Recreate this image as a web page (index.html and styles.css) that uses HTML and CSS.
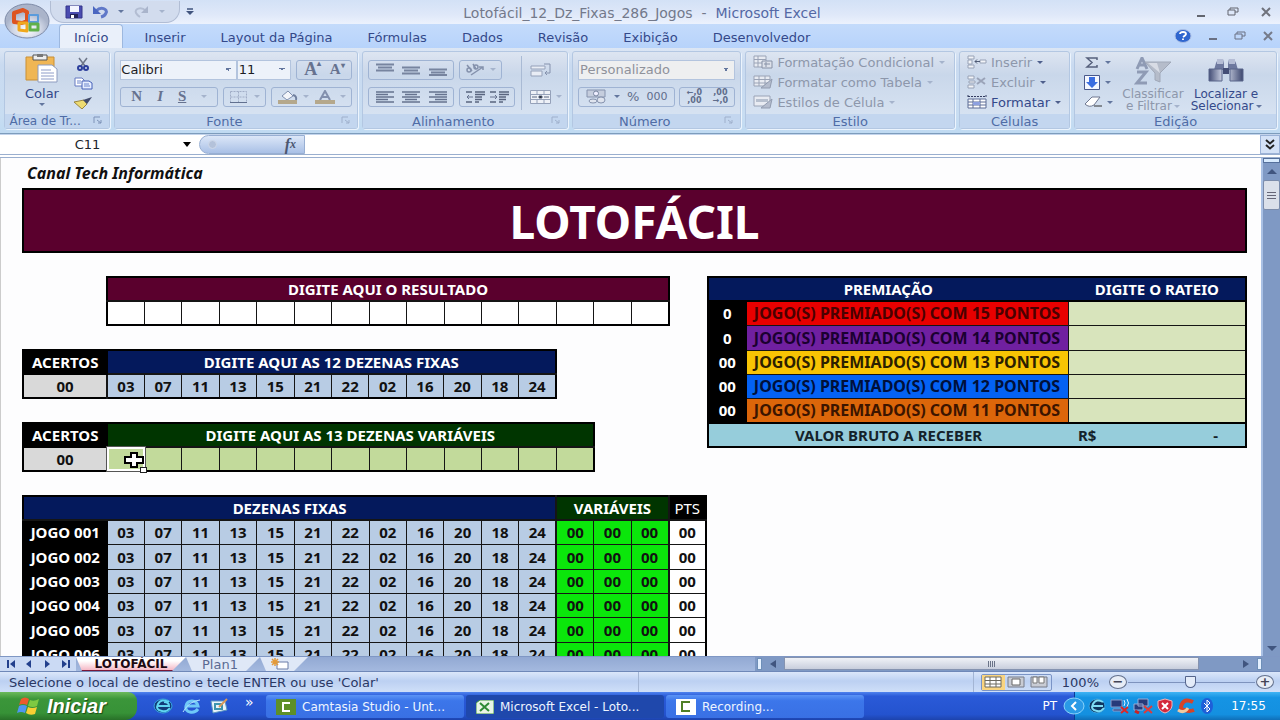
FILE: index.html
```html
<!DOCTYPE html>
<html lang="pt-BR">
<head>
<meta charset="utf-8">
<title>Lotofácil_12_Dz_Fixas_286_Jogos - Microsoft Excel</title>
<link rel="stylesheet" href="styles.css">
</head>
<body>
<header class="titlebar">
  <button class="office" aria-label="Botão Office"><svg width="46" height="36" viewBox="0 0 46 36"><defs><radialGradient id="orb" cy=".75"><stop offset="0" stop-color="#fff"/><stop offset=".6" stop-color="#d3d9e8"/><stop offset="1" stop-color="#aab4ca"/></radialGradient></defs><ellipse cx="23" cy="18" rx="22" ry="17" fill="url(#orb)" stroke="#7e8ba8"/><g fill="none" stroke-linejoin="round"><path d="M10 10l9-3 4 2v9l-5 2-8-1z" stroke="#dd5420" stroke-width="4"/><path d="M25 12h9v7h-9z" stroke="#5a9bdc" stroke-width="2"/><path d="M15 20h8v8l-8-1z" stroke="#f0a81c" stroke-width="3"/><path d="M26 21h8v6h-8z" stroke="#5fb04a" stroke-width="3"/></g></svg></button>
  <div class="quick">
    <button aria-label="Salvar"><svg width="18" height="14" viewBox="0 0 18 14"><path d="M1 1h16v12H1z" fill="#4a4cb0" stroke="#34348a"/><path d="M5 1h9v6H5z" fill="#f2f4ff"/><path d="M5 9h8v4H5z" fill="#232358"/><path d="M6 10h3v3H6z" fill="#fff"/></svg></button>
    <button aria-label="Desfazer"><svg width="17" height="14" viewBox="0 0 17 14"><path d="M4 6c5-5 12-2 10 2q-1 3-5 4" fill="none" stroke="#6078c8" stroke-width="3"/><path d="M1 1v8h8z" fill="#4a66c0"/></svg></button>
    <i class="arrow"></i>
    <button aria-label="Refazer"><svg width="17" height="14" viewBox="0 0 17 14"><path d="M13 6C8 1 1 4 3 8q1 2 4 4" fill="none" stroke="#b3bdd2" stroke-width="2"/><path d="M15 1v7H8z" fill="#a9b4cb"/></svg></button>
    <i class="arrow pale"></i>
  </div>
  <button class="customize" aria-label="Personalizar barra"><svg width="8" height="8"><path d="M1 1h6" stroke="#41547e" stroke-width="1.500"/><path d="M0 3h8L4 7z" fill="#41547e"/></svg></button>
  <h1 class="caption"><span>Lotofácil_12_Dz_Fixas_286_Jogos&nbsp; -&nbsp; </span>Microsoft Excel</h1>
  <div class="winbtns">
    <button aria-label="Minimizar"><svg width="10" height="10"><path d="M1 9h8" stroke="#62656f" stroke-width="2"/></svg></button>
    <button aria-label="Restaurar"><svg width="12" height="10"><path d="M1 3h7v5H1zM3 3V1h8v4H8" fill="none" stroke="#62656f"/></svg></button>
    <button aria-label="Fechar"><svg width="12" height="10"><path d="M2 1l8 8M10 1L2 9" stroke="#6f727c" stroke-width="2"/></svg></button>
  </div>
</header>
<nav class="tabs">
  <button class="tab active">Início</button><button class="tab">Inserir</button><button class="tab">Layout da Página</button><button class="tab">Fórmulas</button><button class="tab">Dados</button><button class="tab">Revisão</button><button class="tab">Exibição</button><button class="tab">Desenvolvedor</button>
  <div class="winbtns">
    <button aria-label="Ajuda"><svg width="18" height="14"><ellipse cx="9" cy="7" rx="8" ry="6.500" fill="#2f66cf" stroke="#a9bde4"/><path d="M6 5q0-2 3-2t3 2q0 1-3 3M9 9.500v1.500" fill="none" stroke="#fff" stroke-width="1.800"/></svg></button>
    <button aria-label="Minimizar pasta"><svg width="10" height="10"><path d="M1 8h8" stroke="#6a7083" stroke-width="2"/></svg></button>
    <button aria-label="Restaurar pasta"><svg width="12" height="10"><path d="M1 3h7v5H1zM3 3V1h8v4H8" fill="none" stroke="#6a7083"/></svg></button>
    <button aria-label="Fechar pasta"><svg width="12" height="10"><path d="M2 1l8 8M10 1L2 9" stroke="#757a89" stroke-width="2"/></svg></button>
  </div>
</nav>
<section class="ribbon">
  <div class="group g-clip">
    <div class="body clip">
      <button class="big"><svg width="34" height="30" viewBox="0 0 34 30"><path d="M1 3h28v23H1z" fill="#f0b654" stroke="#c98f35"/><path d="M8 1h14v5H8z" fill="#eee" stroke="#555"/><path d="M12 0h6v3h-6z" fill="#777"/><path d="M13 11h14l5 4v13H13z" fill="#fff" stroke="#8e9cc0"/><path d="M16 16h10M16 19h13M16 22h13M16 25h13" stroke="#8e9cc8"/></svg>Colar<i class="arrow"></i></button>
      <div class="col">
        <button aria-label="Recortar"><svg width="14" height="14"><path d="M3 1l6 8M11 1L5 9" stroke="#6e7688" stroke-width="1.500"/><circle cx="4" cy="11" r="2" fill="none" stroke="#2c3f9c" stroke-width="2"/><circle cx="10" cy="11" r="2" fill="none" stroke="#2c3f9c" stroke-width="2"/></svg></button>
        <button aria-label="Copiar"><svg width="19" height="13"><path d="M1 1h7l2 2v6H1z" fill="#fff" stroke="#6478c0"/><path d="M8 4h7l3 2v6H8z" fill="#e6edff" stroke="#4560b8"/><path d="M3 4h4M3 6h4M10 7h5M10 9h6" stroke="#6c86cc"/></svg></button>
        <button aria-label="Pincel"><svg width="20" height="13"><path d="M1 6l10-2 3 4-5 5z" fill="#eddb72" stroke="#9a8640"/><path d="M10 4l4 4 5-7z" fill="#414b6c"/></svg></button>
      </div>
    </div>
    <h2>Área de Tr...<svg class="launch" width="9" height="8"><path d="M1 7V1h6M4 4l4 3M8 4v3H5" fill="none" stroke="#7e93b8"/></svg></h2>
  </div>
  <div class="group g-font">
    <div class="body rows">
      <div class="row">
        <select class="combo family" aria-label="Fonte"><option>Calibri</option></select><select class="combo size" aria-label="Tamanho"><option>11</option></select>
        <div class="set grow"><button class="serif a1">A<sup>▴</sup></button><button class="serif a2">A<sup>▾</sup></button></div>
      </div>
      <div class="row">
        <div class="set"><button class="serif b">N</button><button class="serif i">I</button><button class="serif u">S</button><i class="arrow pale"></i></div>
        <div class="set"><button aria-label="Bordas"><svg width="17" height="12"><path d="M.5 .5h16v11M.5 .5v11M8.500 .5v11M.5 6h16" fill="none" stroke="#a0adc6" stroke-dasharray="2 1"/><path d="M0 11.500h17" stroke="#61708f"/></svg></button><i class="arrow pale"></i></div>
        <div class="set grow"><button aria-label="Cor de preenchimento"><svg width="20" height="14"><path d="M4 6l6-5 5 5-6 4z" fill="#f3f5fa" stroke="#8090af"/><path d="M15 5q4 1 3 5" fill="none" stroke="#71809f" stroke-width="2"/><path d="M0 10h19v4H0z" fill="#b5a88c"/></svg></button><i class="arrow pale"></i><button aria-label="Cor da fonte"><svg width="20" height="14"><path d="M5 10l5-9 5 9M7 7h6" fill="none" stroke="#8390ad" stroke-width="2"/><path d="M0 10h20v4H0z" fill="#b5a88c"/></svg></button><i class="arrow pale"></i></div>
      </div>
    </div>
    <h2>Fonte<svg class="launch" width="9" height="8"><path d="M1 7V1h6M4 4l4 3M8 4v3H5" fill="none" stroke="#9fb0cc"/></svg></h2>
  </div>
  <div class="group g-align">
    <div class="body split">
      <div class="rows">
        <div class="row"><div class="set three">
          <button aria-label="Alinhar em cima"><svg width="18" height="13"><path d="M0 1.500h18M2 4.500h14M0 7.500h18" stroke="#77849f" stroke-width="2"/></svg></button>
          <button aria-label="Alinhar no meio"><svg width="18" height="13"><path d="M0 4.500h18M2 7.500h14M0 10.500h18" stroke="#77849f" stroke-width="2"/></svg></button>
          <button aria-label="Alinhar embaixo"><svg width="18" height="13"><path d="M0 6.500h18M2 9.500h14M0 12h18" stroke="#77849f" stroke-width="2"/></svg></button></div>
          <div class="set"><button aria-label="Orientação"><svg width="20" height="13"><g fill="none" stroke="#8491ac" stroke-width="1.500"><circle cx="4" cy="7" r="2"/><path d="M2 2l5 6M8 1l3 5M6 12L18 4M14 4h4v3"/><circle cx="11" cy="4" r="2"/></g></svg></button><i class="arrow pale"></i></div></div>
        <div class="row"><div class="set three">
          <button aria-label="Esquerda"><svg width="18" height="12"><path d="M0 1h18M0 3.500h12M0 6h18M0 8.500h12M0 11h18" stroke="#66738f" stroke-width="1.500"/></svg></button>
          <button aria-label="Centro"><svg width="18" height="12"><path d="M0 1h18M3 3.500h12M0 6h18M3 8.500h12M0 11h18" stroke="#66738f" stroke-width="1.500"/></svg></button>
          <button aria-label="Direita"><svg width="18" height="12"><path d="M0 1h18M6 3.500h12M0 6h18M6 8.500h12M0 11h18" stroke="#66738f" stroke-width="1.500"/></svg></button></div>
          <div class="set two"><button aria-label="Diminuir recuo"><svg width="19" height="12"><path d="M0 1h6M9 1h10M9 3.500h10M9 6h7M9 8.500h7M0 11h6M9 11h4" stroke="#59657f" stroke-width="1.500"/><path d="M7 6H1M3 4L1 6l2 2" fill="none" stroke="#66738f"/></svg></button><button aria-label="Aumentar recuo"><svg width="19" height="12"><path d="M0 1h6M9 1h10M9 3.500h10M9 6h7M9 8.500h7M0 11h6M9 11h4" stroke="#59657f" stroke-width="1.500"/><path d="M0 6h7M5 4l2 2-2 2" fill="none" stroke="#66738f"/></svg></button></div></div>
      </div>
      <div class="rows merge">
        <button class="row" aria-label="Quebrar texto"><svg width="21" height="14"><path d="M1 3h14v3H1zM1 8h11v5H1z" fill="#e9edf5" stroke="#95a1b9"/><path d="M14 1h6v9h-5M17 8l-2 2 2 2" fill="none" stroke="#8592ad"/></svg></button>
        <button class="row" aria-label="Mesclar"><svg width="21" height="14"><path d="M.5 .5h20v13H.5zM.5 4.500h20M.5 9.500h20M7 .5v4M14 .5v4M7 9.500v4M14 9.500v4" fill="#eef1f7" stroke="#95a1b9"/><path d="M2 7h5M14 7h5M9 6h3v2H9z" stroke="#5b6680"/></svg><i class="arrow pale"></i></button>
      </div>
    </div>
    <h2>Alinhamento<svg class="launch" width="9" height="8"><path d="M1 7V1h6M4 4l4 3M8 4v3H5" fill="none" stroke="#9fb0cc"/></svg></h2>
  </div>
  <div class="group g-num">
    <div class="body rows">
      <div class="row"><select class="combo off" aria-label="Formato de número"><option>Personalizado</option></select></div>
      <div class="row">
        <div class="set grow"><button aria-label="Moeda"><svg width="21" height="15"><path d="M1 1h18v7H1z" fill="#c5cddd" stroke="#8592ad"/><circle cx="10" cy="4.500" r="2.500" fill="#eef" stroke="#77849f"/><ellipse cx="15" cy="11" rx="4" ry="3" fill="#dfe4ee" stroke="#8592ad"/><ellipse cx="7" cy="12" rx="4" ry="2" fill="#dfe4ee" stroke="#8592ad"/></svg></button><i class="arrow"></i><button>%</button><button class="n">000</button></div>
        <div class="set two tiny"><button>←,0<br>,00</button><button>,00<br>→,0</button></div>
      </div>
    </div>
    <h2>Número<svg class="launch" width="9" height="8"><path d="M1 7V1h6M4 4l4 3M8 4v3H5" fill="none" stroke="#9fb0cc"/></svg></h2>
  </div>
  <div class="group g-style">
    <div class="body list">
      <button class="dim"><svg width="20" height="14"><path d="M1 1h12v11H1zM1 4.500h12M1 8h12M5 1v11" fill="#e8ebf2" stroke="#9aa3b6"/><path d="M9 6h10v7H9z" fill="#dde1ea" stroke="#8791a6"/><path d="M11 9h6M13 7v5" stroke="#8791a6"/></svg>Formatação Condicional<i class="arrow pale"></i></button>
      <button class="dim"><svg width="20" height="14"><path d="M1 1h16v10H1zM1 4.500h16M1 8h16M6 1v10M12 1v10" fill="#e8ebf2" stroke="#9aa3b6"/><path d="M8 13l11-9-2 9z" fill="#b4bccd" stroke="#929cb0"/></svg>Formatar como Tabela<i class="arrow pale"></i></button>
      <button class="dim"><svg width="20" height="14"><path d="M1 1h16v10H1z" fill="#e8ebf2" stroke="#9aa3b6"/><path d="M3 4h12v3H3z" fill="#b6bfce"/><path d="M8 13l11-9-2 9z" fill="#b4bccd" stroke="#929cb0"/></svg>Estilos de Célula<i class="arrow pale"></i></button>
    </div>
    <h2>Estilo</h2>
  </div>
  <div class="group g-cells">
    <div class="body list">
      <button class="dim"><svg width="20" height="14"><path d="M1 1h6v3H1zM1 10h6v3H1zM1 5h4v4H1zM13 5h6v3h-6z" fill="#f2f4f8" stroke="#98a2b6"/><path d="M13 6.500H8M10 4.500L8 6.500l2 2" fill="none" stroke="#4e5a74"/></svg>Inserir<i class="arrow dark"></i></button>
      <button class="dim"><svg width="20" height="14"><path d="M1 1h6v3H1zM1 10h6v3H1zM2 6h6v2H2z" fill="#f2f4f8" stroke="#98a2b6"/><path d="M10 3l8 6M18 3l-8 6" stroke="#9aa3b8" stroke-width="2"/></svg>Excluir<i class="arrow dark"></i></button>
      <button><svg width="20" height="15"><path d="M1 4h18v9H1zM1 7h18M1 10h18M6 4v9M13 4v9" fill="#fff" stroke="#5c6c96"/><path d="M6 7h7v3H6z" fill="#8da0e0"/><path d="M1 1.500h18M1 0v3M19 0v3" stroke="#333c60" stroke-dasharray="2 1"/></svg>Formatar<i class="arrow dark"></i></button>
    </div>
    <h2>Células</h2>
  </div>
  <div class="group g-edit">
    <div class="body edit">
      <div class="list icons">
        <button aria-label="Soma"><svg width="16" height="13"><path d="M13 4V2H3l5 4.500L3 11h10V9" fill="none" stroke="#56607c" stroke-width="1.500"/></svg><i class="arrow"></i></button>
        <button aria-label="Preencher"><svg width="16" height="15"><path d="M.5 .5h15v14H.5z" fill="#f4f7ff" stroke="#48588c"/><path d="M5 2h6v5h3l-6 6-6-6h3z" fill="#3a6de0"/></svg><i class="arrow"></i></button>
        <button aria-label="Limpar"><svg width="18" height="12"><path d="M1 8l7-7h8l-6 8q-5 3-9-1z" fill="#fff" stroke="#6e7790"/><path d="M10 10h8" stroke="#333"/></svg><i class="arrow"></i></button>
      </div>
      <button class="big dim"><svg width="38" height="28"><path d="M3 12L8 1l5 11M5 8h6M3 15h9L3 26h10" fill="none" stroke="#8f9bb5" stroke-width="3"/><path d="M11 5h26L26 16v9l-5-2v-7z" fill="#b5bcca" stroke="#a0a8b8"/><path d="M14 6h9l3 10" fill="#d8dce5"/></svg>Classificar<span>e Filtrar <i class="arrow pale"></i></span></button>
      <button class="big"><svg width="36" height="26"><defs><linearGradient id="bin"><stop offset="0" stop-color="#444e76"/><stop offset=".45" stop-color="#dfe4f3"/><stop offset="1" stop-color="#3c466e"/></linearGradient></defs><path d="M8 6l2-4h5l1 5v4h4V7l1-5h5l2 4 2 7H6z" fill="#6d789e"/><path d="M1 12h13v12H1zM22 12h13v12H22z" fill="url(#bin)" stroke="#59648a"/><path d="M15 11h6v6h-6z" fill="#444e76"/><path d="M9 2h6v5H9zM21 2h6v5h-6z" fill="#b5bdd5"/></svg>Localizar e<span>Selecionar <i class="arrow"></i></span></button>
    </div>
    <h2>Edição</h2>
  </div>
</section>
<section class="formula">
  <input class="namebox" aria-label="Caixa de nome" value="C11"><i class="arrow black"></i>
  <div class="fx"><span class="knob"></span><button class="fxbtn"><i>f</i><small>x</small></button></div>
  <input class="fbar" aria-label="Barra de fórmulas">
  <button class="expand" aria-label="Expandir"><svg width="12" height="12"><path d="M2 1l4 3.500L10 1M2 6l4 3.500L10 6" fill="none" stroke="#222" stroke-width="2"/></svg></button>
</section>
<main class="work">
  <div class="sheet">
    <p class="author">Canal Tech Informática</p>
    <div class="banner">LOTOFÁCIL</div>
    <div class="stack">
      <table class="t-result"><thead><tr><th colspan="15">DIGITE AQUI O RESULTADO</th></tr></thead><tbody><tr data-blank="15"></tr></tbody></table>
      <table class="t-fixed"><colgroup><col class="lead"></colgroup><thead><tr><th class="black">ACERTOS</th><th colspan="12">DIGITE AQUI AS 12 DEZENAS FIXAS</th></tr></thead><tbody><tr data-fixed="1"><td class="hits">00</td></tr></tbody></table>
      <table class="t-var"><colgroup><col class="lead"></colgroup><thead><tr><th class="black">ACERTOS</th><th colspan="13">DIGITE AQUI AS 13 DEZENAS VARIÁVEIS</th></tr></thead><tbody><tr data-blank="13"><td class="hits">00</td></tr></tbody></table>
      <table class="t-games"><colgroup><col class="lead"></colgroup><thead><tr><th colspan="13">DEZENAS FIXAS</th><th colspan="3" class="vars">VARIÁVEIS</th><th class="pts">PTS</th></tr></thead><tbody id="games"></tbody></table>
    </div>
    <table class="t-prize">
      <colgroup><col class="p1"><col class="p2"><col></colgroup>
      <thead><tr><th colspan="2">PREMIAÇÃO</th><th>DIGITE O RATEIO</th></tr></thead>
      <tbody>
        <tr><th class="black">0</th><td class="red">JOGO(S) PREMIADO(S) COM 15 PONTOS</td><td></td></tr>
        <tr><th class="black">0</th><td class="purple">JOGO(S) PREMIADO(S) COM 14 PONTOS</td><td></td></tr>
        <tr><th class="black">00</th><td class="yellow">JOGO(S) PREMIADO(S) COM 13 PONTOS</td><td></td></tr>
        <tr><th class="black">00</th><td class="blue">JOGO(S) PREMIADO(S) COM 12 PONTOS</td><td></td></tr>
        <tr><th class="black">00</th><td class="orange">JOGO(S) PREMIADO(S) COM 11 PONTOS</td><td></td></tr>
        <tr class="total"><td colspan="2">VALOR BRUTO A RECEBER</td><td><div class="money"><span>R$</span><span>-</span></div></td></tr>
      </tbody>
    </table>
  </div>
  <div class="vscroll"><i class="splitter"></i><i class="up"></i><i class="thumb"></i><i class="down"></i></div>
</main>
<div class="sheetbar">
  <div class="navs">
    <button aria-label="Primeira"><svg width="9" height="8"><path d="M1 0v8" stroke="#23408c" stroke-width="2"/><path d="M8 0v8L3 4z" fill="#23408c"/></svg></button><button aria-label="Anterior"><svg width="9" height="8"><path d="M6 0v8L1 4z" fill="#23408c"/></svg></button><button aria-label="Próxima"><svg width="9" height="8"><path d="M2 0v8l5-4z" fill="#23408c"/></svg></button><button aria-label="Última"><svg width="9" height="8"><path d="M8 0v8" stroke="#23408c" stroke-width="2"/><path d="M1 0v8l5-4z" fill="#23408c"/></svg></button>
  </div>
  <button class="stab on">LOTOFÁCIL</button><button class="stab">Plan1</button><button class="stab new" aria-label="Inserir planilha"><svg width="20" height="12"><path d="M6 4h11v7H6z" fill="#fff" stroke="#6a7da8"/><path d="M4 0v8M0 4h8M1 1l6 6M7 1L1 7" stroke="#e39a3a" stroke-width="1.500"/></svg></button>
  <div class="hscroll"><i class="grip"></i><i class="left"></i><div class="track"><i class="hthumb"><svg width="9" height="6"><path d="M1.500 0v6M3.500 0v6M5.500 0v6M7.500 0v6" stroke="#6b7488"/></svg></i></div><i class="right"></i><i class="grip"></i></div>
</div>
<footer class="status">
  <p>Selecione o local de destino e tecle ENTER ou use 'Colar'</p>
  <div class="empty"></div>
  <div class="views">
    <button class="sel" aria-label="Normal"><svg width="18" height="12"><path d="M1 1h16v10H1zM1 4.500h16M1 8h16M6 1v10M12 1v10" fill="#fff" stroke="#6d6a60"/></svg></button>
    <button aria-label="Layout"><svg width="18" height="12"><path d="M1 1h16v10H1z" fill="#c9ccd4" stroke="#777c8a"/><path d="M5 3h8v6H5z" fill="#fff" stroke="#666"/></svg></button>
    <button aria-label="Quebra"><svg width="18" height="12"><path d="M1 1h16v10H1z" fill="#c9ccd4" stroke="#777c8a"/><path d="M3 1h4v6H3zM9 1h5v6H9z" fill="#fff" stroke="#777"/></svg></button>
  </div>
  <label for="zoom">100%</label>
  <button class="round" aria-label="Reduzir">−</button><input type="range" id="zoom" min="0" max="100" value="49"><button class="round" aria-label="Ampliar">+</button>
</footer>
<div class="taskbar">
  <button class="start"><svg width="24" height="19" viewBox="0 0 24 19"><path d="M4 2q4-3 8 0l-2 6q-4-2-8 0z" fill="#ec5a2c"/><path d="M13 3q4 2 9-1l-2 7q-4 2-9 0z" fill="#7fc942"/><path d="M2 9q4-2 8 0l-2 7q-4-2-8 0z" fill="#4f96f0"/><path d="M11 10q4 2 9 0l-2 7q-5 2-9-1z" fill="#f8cf33"/></svg>Iniciar</button>
  <div class="launchers">
    <button aria-label="Mensageiro"><svg width="20" height="16"><ellipse cx="10" cy="8" rx="9" ry="7" fill="#123c78" stroke="#37a4e4"/><path d="M16 4Q8 0 5 6t4 7q5 1 8-3M5 8h11q0-4-5-4" fill="none" stroke="#5fd6f2" stroke-width="2"/></svg></button>
    <button aria-label="Internet Explorer"><svg width="20" height="16"><path d="M17 11q-3 4-8 3t-4-6 6-5 6 5H5" fill="none" stroke="#6fc9f8" stroke-width="3"/><path d="M2 14Q8 3 19 2" fill="none" stroke="#b5e4fd"/></svg></button>
    <button aria-label="Mostrar área de trabalho"><svg width="20" height="16"><path d="M2 3h14l2 9-14 3z" fill="#e9f3fa" stroke="#5b95c0"/><path d="M6 6h7v5H6z" fill="none" stroke="#3d94ae" stroke-width="2"/><path d="M10 9l8-8" stroke="#d8985a" stroke-width="2"/></svg></button>
    <span>»</span>
  </div>
  <button class="task"><svg width="20" height="16"><path d="M0 0h20v16H0z" fill="#5d8f28"/><path d="M14 4H7v8h7" fill="none" stroke="#fff" stroke-width="2"/></svg>Camtasia Studio - Unt...</button>
  <button class="task cur"><svg width="18" height="14"><path d="M4 0h14v14H0V3z" fill="#e9f5e6" stroke="#3c9140"/><path d="M4 3l9 8M13 3l-9 8" stroke="#2e8a36" stroke-width="2"/></svg>Microsoft Excel - Loto...</button>
  <button class="task"><svg width="20" height="16"><path d="M0 0h20v16H0z" fill="#fff"/><path d="M14 3H6v9h8" fill="none" stroke="#4f7f26" stroke-width="2"/></svg>Recording...</button>
  <span class="lang">PT</span>
  <div class="tray">
    <button class="chev" aria-label="Mostrar ícones"><svg width="22" height="18"><ellipse cx="11" cy="9" rx="10" ry="8" fill="#2a9ae6" stroke="#8ad3fa"/><path d="M13 5L9 9l4 4" fill="none" stroke="#fff" stroke-width="2"/></svg></button>
    <svg width="19" height="16"><ellipse cx="9" cy="8" rx="8" ry="7" fill="#0e3560" stroke="#37a4e4"/><path d="M15 4Q8 0 5 6t4 7q4 1 7-3M5 8h10" fill="none" stroke="#7edcf4" stroke-width="2"/></svg>
    <svg width="20" height="16"><path d="M1 2h11v7H1zM3 11h9v2H3z" fill="#273a7a" stroke="#8a9ccc"/><path d="M14 2q2 3 0 6M17 1q3 4 0 8" fill="none" stroke="#dff1ff"/><path d="M11 9l7 6M18 9l-7 6" stroke="#dd2626" stroke-width="2"/></svg>
    <svg width="20" height="16"><path d="M5 1h10v7H5zM1 6h9v6H1z" fill="#273a7a" stroke="#9aa9d4"/><path d="M2 13l4 2" stroke="#c22" stroke-width="3"/><path d="M11 8l8 7M19 8l-8 7" stroke="#e03a3a" stroke-width="2"/></svg>
    <svg width="18" height="16"><path d="M9 1l7 2v5q-1 5-7 7-6-2-7-7V3z" fill="#d3283a" stroke="#f2b6b8"/><path d="M6 5l6 6M12 5l-6 6" stroke="#fff" stroke-width="2"/></svg>
    <svg width="20" height="16"><path d="M16 4Q8 0 5 6t3 6q4 2 9 0" fill="none" stroke="#d64427" stroke-width="4"/><path d="M1 12q6 4 10-2" fill="none" stroke="#f0c9a0" stroke-width="3"/></svg>
    <svg width="14" height="16"><ellipse cx="7" cy="8" rx="6" ry="8" fill="#1e5fd8"/><path d="M4 5l6 6-3 3V2l3 3-6 6" fill="none" stroke="#fff"/></svg>
    <time>17:55</time>
  </div>
</div>
<script src="script.js"></script>
</body>
</html>
```
FILE: styles.css
```css
* { box-sizing: border-box; }
body { margin: 0; height: 100vh; display: flex; flex-direction: column; overflow: hidden; font-family: "DejaVu Sans", sans-serif; font-size: 13px; color: #34498a; background: #c4d8f4; }
button { font: inherit; color: inherit; background: none; border: 0; padding: 0; margin: 0; display: flex; align-items: center; justify-content: center; white-space: nowrap; }
input, select { font: inherit; margin: 0; }
h1, h2, p { margin: 0; font-weight: normal; }
svg { flex: none; display: block; }

.arrow { flex: none; width: 0; height: 0; border: 3px solid transparent; border-top-color: #63769e; border-bottom: 0; }
.arrow.pale { border-top-color: #a5b3cc; }
.arrow.dark { border-top-color: #4e5f8c; }
.arrow.black { border-width: 5px 4px 0; border-top-color: #000; }

.titlebar { flex: none; height: 24px; display: flex; align-items: center; background: linear-gradient(#d3e1f6, #dfe8f9 60%, #ecf2fd); position: relative; }
.office { position: absolute; left: 4px; top: 3px; z-index: 2; }
.quick { display: flex; align-items: center; gap: 9px; height: 22px; margin-left: 50px; padding: 0 14px; border: 1px solid #b1bdd4; border-top: 0; border-radius: 0 0 14px 14px; background: #d2dcee; }
.customize { padding: 0 6px; }
.caption { flex: 1; text-align: center; font-size: 14px; color: #5468a4; padding: 2px 112px 0 0; }
.caption span { color: #73798b; }
.winbtns { display: flex; align-items: center; gap: 21px; padding-right: 8px; }

.tabs { flex: none; height: 24px; display: flex; align-items: stretch; gap: 7px; padding-left: 59px; background: linear-gradient(#c4dbfb, #b7d3fb); }
.tab { padding: 2px 14px 0; border-radius: 4px 4px 0 0; }
.tab.active { background: #eaf0fa; border: 1px solid #9db8df; border-bottom: 0; padding: 1px 14px 0; }
.tabs .winbtns { margin-left: auto; gap: 16px; padding-right: 6px; }

.ribbon { flex: none; height: 86px; display: flex; gap: 4px; padding: 3px 3px 4px 4px; background: linear-gradient(#dce6f4, #c9daf0 20%, #c8ddf2 80%, #bfdaf2); border-bottom: 1px solid #7d9cbc; }
.group { min-width: 0; display: flex; flex-direction: column; border: 1px solid #b3c7e2; border-radius: 3px; box-shadow: 1px 1px 0 #ecf4fd; background: linear-gradient(#dde5f1, #d0dbec 20%, #c9d7ea 30%, #dbe6f4); }
.g-clip { flex: 106 1 0; }
.g-font { flex: 246 1 0; }
.g-align { flex: 207 1 0; }
.g-num { flex: 170 1 0; }
.g-style { flex: 211 1 0; }
.g-cells { flex: 111 1 0; }
.g-edit { flex: 204 1 0; }
.group h2 { flex: none; height: 14px; display: flex; align-items: center; justify-content: center; font-size: 13px; color: #4f6ca6; background: #c3d6ef; position: relative; white-space: nowrap; }
.group h2:has(.launch) { padding-right: 24px; }
.g-clip h2 { font-size: 12px; }
.launch { position: absolute; right: 7px; top: 2px; }
.body { flex: 1; min-height: 0; padding: 0 5px; }
.clip { display: flex; justify-content: space-between; padding: 2px 16px 2px 20px; }
.col { display: flex; flex-direction: column; justify-content: space-around; align-items: center; }
.big { flex-direction: column; justify-content: flex-start; line-height: 13px; gap: 3px; }
.big span { display: flex; align-items: center; gap: 2px; }
.rows { display: flex; flex-direction: column; justify-content: center; gap: 7px; }
.row { display: flex; align-items: stretch; height: 20px; gap: 5px; }
.combo { appearance: none; height: 20px; border: 1px solid #b3c4de; border-radius: 0; padding: 0 1px; background: linear-gradient(to bottom left, #63769e 50%, transparent 50%) right 8px center / 3px 3px no-repeat, linear-gradient(to bottom right, #63769e 50%, transparent 50%) right 5px center / 3px 3px no-repeat, #edf2fa; color: #1c1c24; }
.family { flex: 121 1 0; min-width: 0; margin-right: -5px; padding-left: 0; }
.size { flex: 54 1 0; min-width: 0; }
.combo.off { flex: 1; min-width: 0; background-color: #eeeff0; color: #8f929b; }
.set { display: flex; align-items: center; justify-content: space-around; gap: 5px; padding: 0 5px; border: 1px solid #9fb3d3; border-radius: 3px; color: #5f6d8b; }
.g-font .row:first-child .set { width: 56px; }
.g-font .row:last-child .set:first-child { width: 98px; }
.g-font .row:last-child .set:nth-child(2) { width: 43px; }
.g-font .row:last-child .set:last-child { flex: 1; }
.serif { font-family: "Liberation Serif", serif; font-weight: bold; color: #66728f; font-size: 15px; }
.serif sup { font-size: 8px; align-self: flex-start; }
.a1 { font-size: 18px; }
.serif.i { font-style: italic; }
.serif.u { text-decoration: underline; }
.split { display: flex; gap: 6px; }
.three { width: 86px; }
.two { width: 56px; }
.merge { border-left: 1px solid #a9bad4; padding-left: 8px; margin-top: 4px; margin-bottom: 4px; }
.merge .row { justify-content: flex-start; align-items: center; }
.g-num .grow { flex: 1; gap: 3px; }
.set .n { font-size: 11px; }
.tiny { font-size: 8px; line-height: 8px; font-weight: bold; gap: 2px; padding: 0 2px; }
.g-num .row { gap: 4px; }
.list { display: flex; flex-direction: column; justify-content: space-around; padding: 0 7px 2px; }
.list button { justify-content: flex-start; gap: 4px; height: 20px; }
button.dim { color: #8d97ab; }
.list .arrow { margin-left: 1px; }
.edit { display: flex; padding: 0; }
.edit .big { padding-top: 5px; gap: 0; line-height: 12px; font-size: 12px; }
.edit .big svg { height: 28px; margin-bottom: 3px; }
.edit .big + .big { margin-left: 7px; }
.icons { padding: 0 9px 2px; }

.formula { flex: none; height: 24px; display: flex; align-items: stretch; background: #fff; border-top: 1px solid #c3d4ec; border-bottom: 4px double #9aafcf; }
.namebox { width: 183px; border: 0; padding: 0 8px 0 0; text-align: center; color: #20242c; background: none; }
.formula > .arrow { align-self: center; }
.fx { width: 106px; margin-left: 8px; display: flex; align-items: center; justify-content: space-between; padding: 0 8px; border: 1px solid #98afd3; border-radius: 10px 0 0 10px; background: linear-gradient(#dce7f8, #a9c0e6); }
.knob { width: 9px; height: 9px; border-radius: 50%; background: #b4c2da; border: 1px solid #cfd9ea; }
.fxbtn { font: bold 16px "Liberation Serif", serif; color: #4b5670; }
.fxbtn small { font-style: italic; font-size: 12px; }
.fbar { flex: 1; min-width: 0; border: 0; background: none; }
.expand { width: 20px; background: #d4e2f7; border: 1px solid #9bb2d7; }

.work { flex: 1; min-height: 0; display: flex; background: #fdfdfe; border-left: 1px solid #ccc; }
.sheet { flex: 1; min-width: 0; overflow: hidden; display: grid; grid-template-columns: 685px 1fr; grid-template-rows: 28px 65px auto; padding: 2px 14px 0 21px; align-items: start; font-family: "Noto Sans", sans-serif; font-weight: bold; font-size: 15px; color: #111; }
.author { grid-column: 1 / 3; font-style: italic; font-weight: bold; font-size: 16px; padding-left: 5px; line-height: 26px; }
.banner { grid-column: 1 / 3; height: 65px; display: flex; align-items: center; justify-content: center; background: #5a002d; border: 2px solid #000; color: #fff; font-size: 46px; line-height: 60px; }
.stack { display: flex; flex-direction: column; gap: 23px; margin-top: 23px; }
.sheet table { border-collapse: collapse; table-layout: fixed; border: 2px solid #000; background: #fff; }
.sheet th, .sheet td { padding: 0; border: 1px solid #151515; text-align: center; line-height: 22px; font-weight: bold; white-space: nowrap; }
.sheet thead th { border-bottom-width: 2px; color: #fff; background: #04195c; height: 24px; }
.sheet tbody tr { height: 24px; }
.sheet tbody tr:nth-child(3n+2) { height: 25px; }
.lead { width: 84px; }
.sheet .black, .sheet thead .black { background: #000; color: #fff; border-color: #000; }
.t-result { width: 564px; margin-left: 84px; }
.sheet .t-result th { background: #5a002d; }
.t-fixed { width: 535px; }
.t-var { width: 573px; }
.t-games { width: 685px; }
.sheet .hits { background: #d9d9d9; border-right-width: 2px; }
.num { background: #b8cce4; }
.sheet .t-var thead th:last-child, .sheet .vars { background: #003500; }
.t-var .blank { background: #c2da9b; position: relative; }
.sheet .vars { border-left-width: 2px; }
.sheet thead .pts { background: #000; font-weight: normal; border-left-width: 2px; }
.green { background: #0be60b; }
.sheet .t-games tbody th { background: #000; color: #fff; border-color: #000; }
.sheet .edge { border-left-width: 2px; }
.selected { position: absolute; inset: -1px; border: 2px solid #fff; outline: 1px solid #555; z-index: 1; }
.selected::after { content: ""; position: absolute; right: -4px; bottom: -4px; width: 5px; height: 4px; background: #fff; border: 1px solid #222; }
.cross { position: absolute; left: 16px; top: 4px; z-index: 3; }
.t-prize { width: 100%; margin-top: 23px; }
.p1 { width: 38px; }
.p2 { width: 322px; }
.t-prize td:last-child { background: #d8e4bc; }
.t-prize td:nth-child(2) { font-size: 16px; }
.t-prize .red { background: #e80000; color: #4a0000; }
.t-prize .purple { background: #7020a0; color: #1b0030; }
.t-prize .yellow { background: #f8c404; color: #2c2000; }
.t-prize .blue { background: #0462f4; color: #00103a; }
.t-prize .orange { background: #dc660a; color: #3c1500; }
.sheet .t-prize thead th { border-color: #000 #04195c; }
.sheet .t-prize .total td { background: #96cddb; border-top: 2px solid #000; border-left: 0; border-right: 0; font-size: 15px; color: #14222a; }
.money { display: flex; justify-content: space-between; padding: 0 27px 0 10px; }

.vscroll { width: 19px; display: flex; flex-direction: column; align-items: center; background: #7f99c4; border-left: 2px solid #a9c0e4; }
.splitter { width: 17px; height: 5px; background: #d8ebff; border: 1px solid #55709c; }
.up { margin: 6px 0; border: 5px solid transparent; border-top: 0; border-bottom: 5px solid #40557f; }
.thumb { width: 17px; height: 30px; border: 1px solid #7c8cab; border-radius: 2px; background: linear-gradient(#667, #667) center 11px / 9px 1px no-repeat, linear-gradient(#667, #667) center 14px / 9px 1px no-repeat, linear-gradient(#667, #667) center 17px / 9px 1px no-repeat, #dbe0ea; }
.down { margin: auto 0 5px; border: 5px solid transparent; border-bottom: 0; border-top: 5px solid #40557f; }

.sheetbar { flex: none; height: 15px; display: flex; align-items: stretch; background: linear-gradient(#92a9d3, #a4b9df); border-top: 1px solid #7f97c4; }
.navs { display: flex; align-items: center; gap: 9px; padding: 0 6px 0 7px; background: #cbdaf4; }
.stab { width: 74px; background: #dfe8f7; clip-path: polygon(0 0, 100% 0, calc(100% - 14px) 100%, 6px 100%); color: #5a6a92; padding-right: 6px; line-height: 13px; }
.stab.on { width: 110px; background: linear-gradient(#fff 30%, #f5b9c6); border-bottom: 1px solid #7a1838; color: #1c0a12; font-weight: bold; font-size: 12px; padding: 1px 0 0; }
.stab.new { width: 48px; }
.hscroll { margin-left: auto; width: 41%; display: flex; align-items: center; gap: 8px; padding: 0 18px 0 2px; background: #7f99c4; }
.grip { flex: none; width: 5px; height: 12px; background: #e4f0ff; border: 1px solid #6e8fb8; }
.left { border: 4px solid transparent; border-left: 0; border-right: 6px solid #40557f; }
.right { border: 4px solid transparent; border-right: 0; border-left: 6px solid #40557f; }
.track { flex: 1; height: 100%; padding-right: 36px; }
.hthumb { display: flex; height: 13px; align-items: center; justify-content: center; border: 1px solid #8593b0; background: linear-gradient(#f0f2f7, #c8cedc); }

.status { flex: none; height: 21px; display: flex; align-items: center; background: linear-gradient(#dbe7fa, #bcd0f2 45%, #cfdff8); border-top: 1px solid #6f88b8; color: #2a3864; padding-right: 6px; }
.status p { width: 638px; padding-left: 9px; }
.empty { flex: 1; align-self: stretch; border: 1px solid #a3b5d4; border-width: 0 1px; }
.views { display: flex; margin-left: 7px; border: 1px solid #7a94c6; border-radius: 2px; }
.views button { width: 23px; height: 15px; }
.views .sel { background: #f9d480; }
.status label { margin-left: 10px; }
.round { flex: none; width: 18px; height: 14px; border: 1px solid #63708c; border-radius: 50%; background: #e8edf6; line-height: 12px; font-weight: bold; color: #445; }
label + .round { margin-left: 10px; }
#zoom { appearance: none; width: 127px; height: 14px; margin: 0 1px; background: linear-gradient(#7e93bd, #7e93bd) center / 100% 1px no-repeat; }
#zoom::-webkit-slider-thumb { appearance: none; width: 11px; height: 12px; border: 1px solid #55658c; background: #e4ecf9; border-radius: 1px 1px 6px 6px; }

.taskbar { flex: none; height: 28px; display: flex; align-items: stretch; font-size: 12px; color: #fff; background: linear-gradient(#4f83ee, #2a5ad8 15%, #2453cf 80%, #1d43ad); }
.start { width: 137px; gap: 6px; padding-right: 14px; font-size: 20px; font-style: italic; font-weight: bold; font-family: "Liberation Sans", sans-serif; text-shadow: 1px 1px 1px #1d4a14; background: linear-gradient(#6cba5c, #3b963a 25%, #379237 75%, #287028); border-radius: 0 9px 12px 0; }
.launchers { width: 128px; display: flex; align-items: center; gap: 8px; padding-left: 16px; }
.launchers span { margin: -9px 0 0 8px; font-size: 14px; }
.task { flex: 0 1 198px; min-width: 0; margin: 3px 1px 2px; padding-left: 10px; justify-content: flex-start; gap: 6px; background: linear-gradient(#5c94f6, #3c76ea 25%, #3970e4); border-radius: 3px; color: #eef4ff; }
.task.cur { background: #1f48ac; }
.lang { margin-left: auto; align-self: center; padding-right: 17px; }
.tray { width: 206px; display: flex; align-items: center; gap: 3px; background: linear-gradient(#3fb4f4, #1594e4 20%, #1490e0 80%, #0f6fb8); border-left: 1px solid #0b3b96; }
.chev { margin-left: -12px; }
.tray time { margin: 0 auto; }
```
FILE: script.js
```js
const fixed = ["03", "07", "11", "13", "15", "21", "22", "02", "16", "20", "18", "24"];

function cell(row, text, cls, tag = "td") {
  const el = document.createElement(tag);
  el.textContent = text;
  if (cls) el.className = cls;
  row.appendChild(el);
  return el;
}

document.querySelectorAll("[data-blank]").forEach(row => {
  for (let i = 0; i < +row.dataset.blank; i++) cell(row, "", "blank");
});
document.querySelectorAll("[data-fixed]").forEach(row => fixed.forEach(n => cell(row, n, "num")));

const games = document.getElementById("games");
for (let g = 1; g <= 6; g++) {
  const row = games.insertRow();
  cell(row, "JOGO " + String(g).padStart(3, "0"), "", "th");
  fixed.forEach(n => cell(row, n, "num"));
  for (let i = 0; i < 3; i++) cell(row, "00", i ? "green" : "green edge");
  cell(row, "00", "edge");
}

document.querySelector(".t-var .blank").innerHTML =
  '<span class="selected"></span><svg class="cross" width="20" height="16"><path d="M7 1h6v4h6v6h-6v4H7v-4H1V5h6z" fill="#fff" stroke="#000" stroke-width="2"/></svg>';
```
